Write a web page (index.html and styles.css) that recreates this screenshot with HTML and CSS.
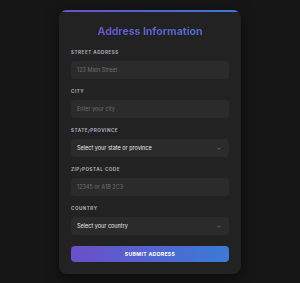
FILE: index.html
```html
<!DOCTYPE html>
<html lang="en">
<head>
    <meta charset="UTF-8">
    <meta name="viewport" content="width=device-width, initial-scale=1.0">
    <title>Address Information</title>
    <link rel="stylesheet" href="styles.css">
</head>
<body>

<form class="card">
    <h1 class="title">Address Information</h1>

    <div class="field">
        <label for="street">Street Address</label>
        <input id="street" type="text" placeholder="123 Main Street">
    </div>

    <div class="field">
        <label for="city">City</label>
        <input id="city" type="text" placeholder="Enter your city">
    </div>

    <div class="field">
        <label for="state">State/Province</label>
        <div class="select">
            <select id="state">
                <option>Select your state or province</option>
            </select>
            <svg class="chevron" viewBox="0 0 10 6" width="4" height="3"><path d="M1 1l4 4 4-4" fill="none" stroke="#8a8a8a" stroke-width="1.6"/></svg>
        </div>
    </div>

    <div class="field">
        <label for="zip">ZIP/Postal Code</label>
        <input id="zip" type="text" placeholder="12345 or A1B 2C3">
    </div>

    <div class="field">
        <label for="country">Country</label>
        <div class="select">
            <select id="country">
                <option>Select your country</option>
            </select>
            <svg class="chevron" viewBox="0 0 10 6" width="4" height="3"><path d="M1 1l4 4 4-4" fill="none" stroke="#8a8a8a" stroke-width="1.6"/></svg>
        </div>
    </div>

    <button type="submit" class="submit">Submit Address</button>
</form>

</body>
</html>
```

FILE: styles.css
```css
body {
    font-family: Inter, "Open Sans", sans-serif;
    margin: 0;
    padding: 0;
    display: flex;
    justify-content: center;
    align-items: center;
    height: 100vh;
    background-color: #161616;
}

.card {
    width: 182px;
    box-sizing: border-box;
    padding: 15px 12px 12px;
    background-color: #222222;
    border-radius: 8px;
    box-shadow: 0 4px 14px rgba(0, 0, 0, 0.5);
    position: relative;
    overflow: hidden;
}

.card::before {
    content: "";
    position: absolute;
    top: 0;
    left: 0;
    right: 0;
    height: 2px;
    background: linear-gradient(90deg, #6a4fc9, #3b7ad6);
}

.title {
    margin: 0 0 11px;
    font-size: 10.5px;
    line-height: 14px;
    font-weight: 700;
    text-align: center;
    background: linear-gradient(90deg, #6d52cc, #4a74d8);
    -webkit-background-clip: text;
    background-clip: text;
    color: transparent;
}

.field {
    margin-bottom: 10px;
}

label {
    display: block;
    font-size: 4.6px;
    line-height: 6px;
    font-weight: 700;
    letter-spacing: 0.5px;
    text-transform: uppercase;
    color: #a9aeb8;
    margin-bottom: 5px;
}

input,
select {
    display: block;
    width: 100%;
    box-sizing: border-box;
    height: 18px;
    padding: 0 6px;
    font-family: inherit;
    font-size: 5.5px;
    color: #e8e8e8;
    background-color: #2b2b2b;
    border: none;
    border-radius: 4px;
    outline: none;
}

input::placeholder {
    color: #6f6f6f;
}

select {
    appearance: none;
    -webkit-appearance: none;
}

.select {
    position: relative;
}

.chevron {
    position: absolute;
    right: 8px;
    top: 8px;
}

.submit {
    display: block;
    width: 100%;
    height: 16px;
    margin-top: 11px;
    border: none;
    border-radius: 4px;
    font-family: inherit;
    font-size: 5.2px;
    font-weight: 700;
    letter-spacing: 0.3px;
    text-transform: uppercase;
    color: #ffffff;
    background: linear-gradient(90deg, #6b4fc8, #3a7bd5);
    cursor: pointer;
}
```
